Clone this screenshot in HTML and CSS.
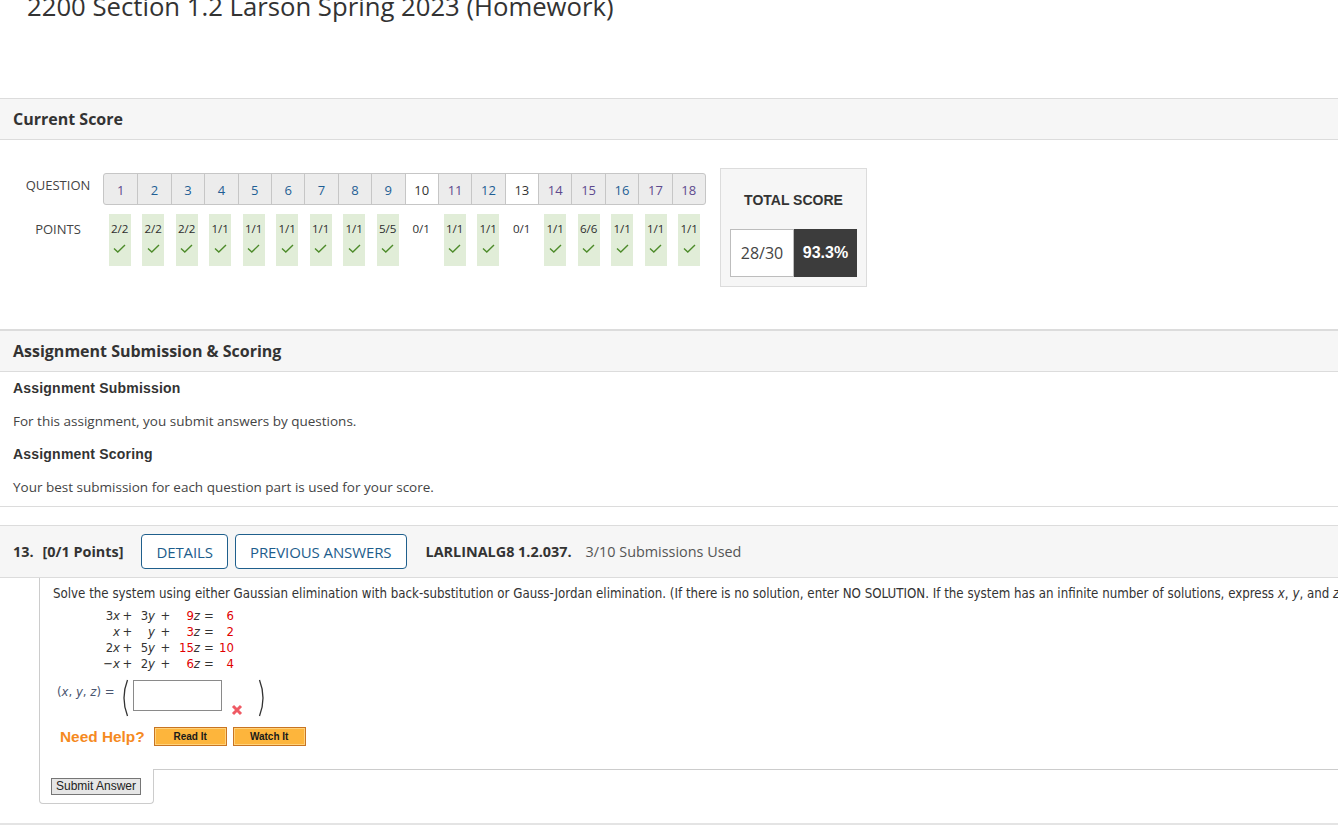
FILE: index.html
```html
<!DOCTYPE html>
<html>
<head>
<meta charset="utf-8">
<link rel="stylesheet" href="styles.css">
</head>
<body>
<h1 class="title">2200 Section 1.2 Larson Spring 2023 (Homework)</h1>

<section class="panel">
  <div class="panel-head">Current Score</div>
  <div class="score-area">
    <div class="grid-wrap">
      <div class="row q-row">
        <div class="label">QUESTION</div>
        <div class="qnums">
          <div class="qn v">1</div><div class="qn">2</div><div class="qn">3</div><div class="qn">4</div><div class="qn">5</div><div class="qn">6</div><div class="qn">7</div><div class="qn">8</div><div class="qn">9</div><div class="qn open">10</div><div class="qn v">11</div><div class="qn">12</div><div class="qn open">13</div><div class="qn v">14</div><div class="qn v">15</div><div class="qn">16</div><div class="qn v">17</div><div class="qn v">18</div>
        </div>
      </div>
      <div class="row p-row">
        <div class="label">POINTS</div>
        <div class="pts">
          <div class="pc"><div class="pt ok">2/2<svg class="chk" viewBox="0 0 13 9"><path d="M1 4.5 L4.8 8 L12 1"/></svg></div></div>
          <div class="pc"><div class="pt ok">2/2<svg class="chk" viewBox="0 0 13 9"><path d="M1 4.5 L4.8 8 L12 1"/></svg></div></div>
          <div class="pc"><div class="pt ok">2/2<svg class="chk" viewBox="0 0 13 9"><path d="M1 4.5 L4.8 8 L12 1"/></svg></div></div>
          <div class="pc"><div class="pt ok">1/1<svg class="chk" viewBox="0 0 13 9"><path d="M1 4.5 L4.8 8 L12 1"/></svg></div></div>
          <div class="pc"><div class="pt ok">1/1<svg class="chk" viewBox="0 0 13 9"><path d="M1 4.5 L4.8 8 L12 1"/></svg></div></div>
          <div class="pc"><div class="pt ok">1/1<svg class="chk" viewBox="0 0 13 9"><path d="M1 4.5 L4.8 8 L12 1"/></svg></div></div>
          <div class="pc"><div class="pt ok">1/1<svg class="chk" viewBox="0 0 13 9"><path d="M1 4.5 L4.8 8 L12 1"/></svg></div></div>
          <div class="pc"><div class="pt ok">1/1<svg class="chk" viewBox="0 0 13 9"><path d="M1 4.5 L4.8 8 L12 1"/></svg></div></div>
          <div class="pc"><div class="pt ok">5/5<svg class="chk" viewBox="0 0 13 9"><path d="M1 4.5 L4.8 8 L12 1"/></svg></div></div>
          <div class="pc"><div class="pt">0/1</div></div>
          <div class="pc"><div class="pt ok">1/1<svg class="chk" viewBox="0 0 13 9"><path d="M1 4.5 L4.8 8 L12 1"/></svg></div></div>
          <div class="pc"><div class="pt ok">1/1<svg class="chk" viewBox="0 0 13 9"><path d="M1 4.5 L4.8 8 L12 1"/></svg></div></div>
          <div class="pc"><div class="pt">0/1</div></div>
          <div class="pc"><div class="pt ok">1/1<svg class="chk" viewBox="0 0 13 9"><path d="M1 4.5 L4.8 8 L12 1"/></svg></div></div>
          <div class="pc"><div class="pt ok">6/6<svg class="chk" viewBox="0 0 13 9"><path d="M1 4.5 L4.8 8 L12 1"/></svg></div></div>
          <div class="pc"><div class="pt ok">1/1<svg class="chk" viewBox="0 0 13 9"><path d="M1 4.5 L4.8 8 L12 1"/></svg></div></div>
          <div class="pc"><div class="pt ok">1/1<svg class="chk" viewBox="0 0 13 9"><path d="M1 4.5 L4.8 8 L12 1"/></svg></div></div>
          <div class="pc"><div class="pt ok">1/1<svg class="chk" viewBox="0 0 13 9"><path d="M1 4.5 L4.8 8 L12 1"/></svg></div></div>
        </div>
      </div>
    </div>
    <div class="total">
      <div class="total-title">TOTAL SCORE</div>
      <div class="total-vals">
        <div class="tv-raw">28/30</div>
        <div class="tv-pct">93.3%</div>
      </div>
    </div>
  </div>
</section>

<section class="panel panel-2">
  <div class="panel-head">Assignment Submission &amp; Scoring</div>
  <div class="info">
    <div class="info-h">Assignment Submission</div>
    <p class="info-p">For this assignment, you submit answers by questions.</p>
    <div class="info-h">Assignment Scoring</div>
    <p class="info-p info-last">Your best submission for each question part is used for your score.</p>
  </div>
</section>

<section class="qpanel">
  <div class="q-head">
    <span class="q-num">13.</span><span class="q-pts">[0/1 Points]</span>
    <button class="q-btn">DETAILS</button>
    <button class="q-btn q-btn2">PREVIOUS ANSWERS</button>
    <span class="q-code">LARLINALG8 1.2.037.</span>
    <span class="q-subs">3/10 Submissions Used</span>
  </div>
  <div class="q-body">
    <p class="q-text">Solve the system using either Gaussian elimination with back-substitution or Gauss-Jordan elimination. (If there is no solution, enter NO SOLUTION. If the system has an infinite number of solutions, express <i>x</i>, <i>y</i>, and <i>z</i> in terms of the parameter <i>t</i>.)</p>
    <div class="eq">
      <span class="r">3<i>x</i></span><span class="c">+</span><span class="r">3<i>y</i></span><span class="c">+</span><span class="r"><b class="red">9</b><i>z</i></span><span class="c">=</span><span class="r red">6</span>
      <span class="r"><i>x</i></span><span class="c">+</span><span class="r"><i>y</i></span><span class="c">+</span><span class="r"><b class="red">3</b><i>z</i></span><span class="c">=</span><span class="r red">2</span>
      <span class="r">2<i>x</i></span><span class="c">+</span><span class="r">5<i>y</i></span><span class="c">+</span><span class="r"><b class="red">15</b><i>z</i></span><span class="c">=</span><span class="r red">10</span>
      <span class="r">&minus;<i>x</i></span><span class="c">+</span><span class="r">2<i>y</i></span><span class="c">+</span><span class="r"><b class="red">6</b><i>z</i></span><span class="c">=</span><span class="r red">4</span>
    </div>
    <div class="ans">
      <span class="ans-label">(<i>x</i>, <i>y</i>, <i>z</i>) =</span>
      <svg class="paren" viewBox="0 0 9 38"><path d="M7.5 1 Q0.5 19 7.5 37"/></svg>
      <span class="ans-input"></span>
      <svg class="xmark" viewBox="0 0 12 12"><path d="M2 2 L10 10 M10 2 L2 10"/></svg>
      <svg class="paren paren-r" viewBox="0 0 9 38"><path d="M1.5 1 Q8.5 19 1.5 37"/></svg>
    </div>
    <div class="help">
      <span class="help-label">Need Help?</span>
      <span class="help-btn">Read It</span>
      <span class="help-btn">Watch It</span>
    </div>
  </div>
  <div class="q-foot">
    <div class="submit-tab"><button class="submit-btn">Submit Answer</button></div>
    <div class="foot-fill"></div>
  </div>
</section>
</body>
</html>
```

FILE: styles.css
```css
html, body {
  margin: 0;
  padding: 0;
  overflow: hidden;
  background: #fff;
}
body {
  font-family: "Open Sans", "DejaVu Sans", sans-serif;
  color: #333;
  width: 1338px;
  height: 827px;
}

.title {
  font-family: "Open Sans", sans-serif;
  font-weight: 400;
  font-size: 25.7px;
  line-height: 26px;
  color: #333;
  margin: -6px 0 0 27px;
  height: 26px;
  white-space: nowrap;
}

.panel {
  margin-top: 78px;
}
.panel-head {
  height: 40px;
  border-top: 1px solid #dcdcdc;
  border-bottom: 1px solid #dcdcdc;
  background: #f6f6f6;
  font-weight: 700;
  font-size: 16px;
  line-height: 40px;
  padding-left: 13px;
  color: #333;
}

.score-area {
  display: flex;
  align-items: flex-start;
  padding: 28px 0 42px 0;
}
.grid-wrap {
  margin-top: 5px;
  padding-left: 13px;
}
.row {
  display: flex;
}
.label {
  width: 90px;
  text-align: center;
  font-size: 13px;
  color: #444;
}
.q-row .label {
  line-height: 24px;
}
.qnums {
  display: grid;
  grid-template-columns: repeat(18, 1fr);
  width: 601px;
  border: 1px solid #c6c6c6;
  border-radius: 3px;
  overflow: hidden;
  background: #ececec;
}
.qn {
  height: 30px;
  line-height: 32px;
  text-align: center;
  font-size: 13px;
  color: #1f5f95;
  border-left: 1px solid #c6c6c6;
}
.qn:first-child {
  border-left: none;
}
.qn.v {
  color: #5e4a8e;
}
.qn.open {
  background: #fff;
  color: #333;
}

.p-row {
  margin-top: 9px;
}
.p-row .label {
  line-height: 30px;
}
.pts {
  display: grid;
  grid-template-columns: repeat(18, 1fr);
  width: 603px;
}
.pc {
  display: flex;
  justify-content: center;
}
.pt {
  width: 22px;
  height: 45px;
  padding-top: 7px;
  font-size: 11.6px;
  line-height: 16px;
  text-align: center;
  color: #2e2e2e;
  display: flex;
  flex-direction: column;
  align-items: center;
  white-space: nowrap;
}
.pt.ok {
  background: #e1edd8;
}
.chk {
  width: 13px;
  height: 9px;
  margin-top: 7px;
  fill: none;
  stroke: #4d8b2a;
  stroke-width: 1.4;
}

.total {
  margin-left: 14px;
  width: 127px;
  padding: 0 9px 9px 9px;
  border: 1px solid #dcdcdc;
  background: #f6f6f6;
}
.total-title {
  font-family: "Liberation Sans", Arial, sans-serif;
  font-weight: 700;
  font-size: 14px;
  line-height: 16px;
  padding: 23px 0 21px 0;
  text-align: center;
  color: #333;
  white-space: nowrap;
}
.total-vals {
  display: flex;
  height: 48px;
}
.tv-raw {
  width: 62px;
  border: 1px solid #bdbdbd;
  background: #fff;
  font-size: 16px;
  line-height: 46px;
  text-align: center;
  color: #444;
}
.tv-pct {
  width: 63px;
  background: #3c3c3c;
  color: #fff;
  font-family: "Liberation Sans", Arial, sans-serif;
  font-weight: 700;
  font-size: 16px;
  line-height: 48px;
  text-align: center;
}

.panel-2 {
  margin-top: 0;
}
.panel-2 .panel-head {
  border-top: 2px solid #dcdcdc;
}
.info {
  border-bottom: 1px solid #dcdcdc;
  padding: 6px 0 0 13px;
}
.info-h {
  font-family: "Liberation Sans", Arial, sans-serif;
  font-weight: 700;
  font-size: 14px;
  letter-spacing: 0.2px;
  line-height: 20px;
  color: #333;
}
.info-p {
  margin: 0;
  font-size: 13.5px;
  line-height: 20px;
  padding: 13px 0;
  color: #444;
}
.info-p.info-last {
  padding-bottom: 9px;
}

.qpanel {
  margin-top: 18px;
  border-bottom: 2px solid #e4e4e4;
  padding-bottom: 19px;
}
.q-head {
  display: flex;
  align-items: center;
  height: 51px;
  border-top: 1px solid #dcdcdc;
  border-bottom: 1px solid #dcdcdc;
  background: #f6f6f6;
  padding-left: 13px;
  font-size: 14.4px;
  white-space: nowrap;
}
.q-num {
  font-weight: 700;
  margin-right: 9px;
}
.q-pts {
  font-weight: 700;
  margin-right: 18px;
}
.q-btn {
  font-family: "Open Sans", sans-serif;
  font-size: 15px;
  color: #1d5d8c;
  background: #fff;
  border: 1px solid #1f5f8c;
  border-radius: 4px;
  height: 35px;
  padding: 0 14px;
  margin-right: 7px;
  letter-spacing: -0.1px;
}
.q-btn2 {
  margin-right: 19px;
}
.q-code {
  font-weight: 700;
  margin-right: 14px;
}
.q-subs {
  color: #555;
}

.q-body {
  margin-left: 39px;
  border-left: 1px solid #cccccc;
  padding: 8px 0 23px 13px;
  font-family: "DejaVu Sans Condensed", "DejaVu Sans", sans-serif;
  font-stretch: condensed;
  font-size: 13px;
  color: #333;
}
.q-text {
  margin: 0;
  line-height: 16px;
  font-size: 13.2px;
  white-space: nowrap;
}
.eq {
  display: grid;
  grid-template-columns: 20px 15px 20px 21px 24px 18px 16px;
  grid-auto-rows: 16px;
  margin: 6px 0 0 47px;
  line-height: 16px;
  white-space: nowrap;
}
.eq .r {
  text-align: right;
}
.eq .c {
  text-align: center;
}
.eq i {
  font-style: italic;
}
.red {
  color: #e00000;
  font-weight: 400;
}

.ans {
  display: flex;
  align-items: flex-start;
  margin-top: 7px;
  margin-left: 4px;
}
.ans-label {
  color: #4a5670;
  margin-top: 5px;
  line-height: 16px;
  margin-right: 5px;
}
.paren {
  width: 9px;
  height: 38px;
  fill: none;
  stroke: #333;
  stroke-width: 1.3;
}
.ans-input {
  width: 87px;
  height: 29px;
  border: 1px solid #8a8a8a;
  background: #fff;
  margin-left: 4px;
  margin-top: 1px;
}
.xmark {
  width: 12px;
  height: 12px;
  margin-left: 9px;
  margin-top: 25px;
  stroke: #ef5a64;
  stroke-width: 3;
}
.paren-r {
  margin-left: 15px;
}

.help {
  display: flex;
  align-items: center;
  margin-top: 10px;
  margin-left: 7px;
  height: 19px;
}
.help-label {
  font-family: "Liberation Sans", Arial, sans-serif;
  font-weight: 700;
  font-size: 15.4px;
  color: #f58a1f;
  margin-right: 9px;
}
.help-btn {
  display: inline-block;
  width: 69px;
  height: 15px;
  line-height: 15px;
  border: 1px solid #c87422;
  box-shadow: inset 0 0 0 1px #ffd27a;
  background: #fdb53c;
  font-family: "Liberation Sans", Arial, sans-serif;
  font-weight: 700;
  font-size: 10px;
  text-align: center;
  color: #1a1a1a;
  margin-right: 6px;
  padding: 1px;
}

.q-foot {
  display: flex;
  margin-left: 39px;
}
.submit-tab {
  border-left: 1px solid #cccccc;
  border-right: 1px solid #cccccc;
  border-bottom: 1px solid #cccccc;
  border-bottom-left-radius: 4px;
  border-bottom-right-radius: 4px;
  padding: 9px 12px 8px 11px;
}
.submit-btn {
  display: block;
  font-family: "Liberation Sans", Arial, sans-serif;
  font-size: 12px;
  width: 90px;
  height: 17px;
  padding: 0;
  line-height: 15px;
  background: #e6e6e6;
  border: 1px solid #767676;
  border-radius: 0;
  color: #222;
}
.foot-fill {
  flex: 1;
  border-top: 1px solid #cccccc;
}
```
